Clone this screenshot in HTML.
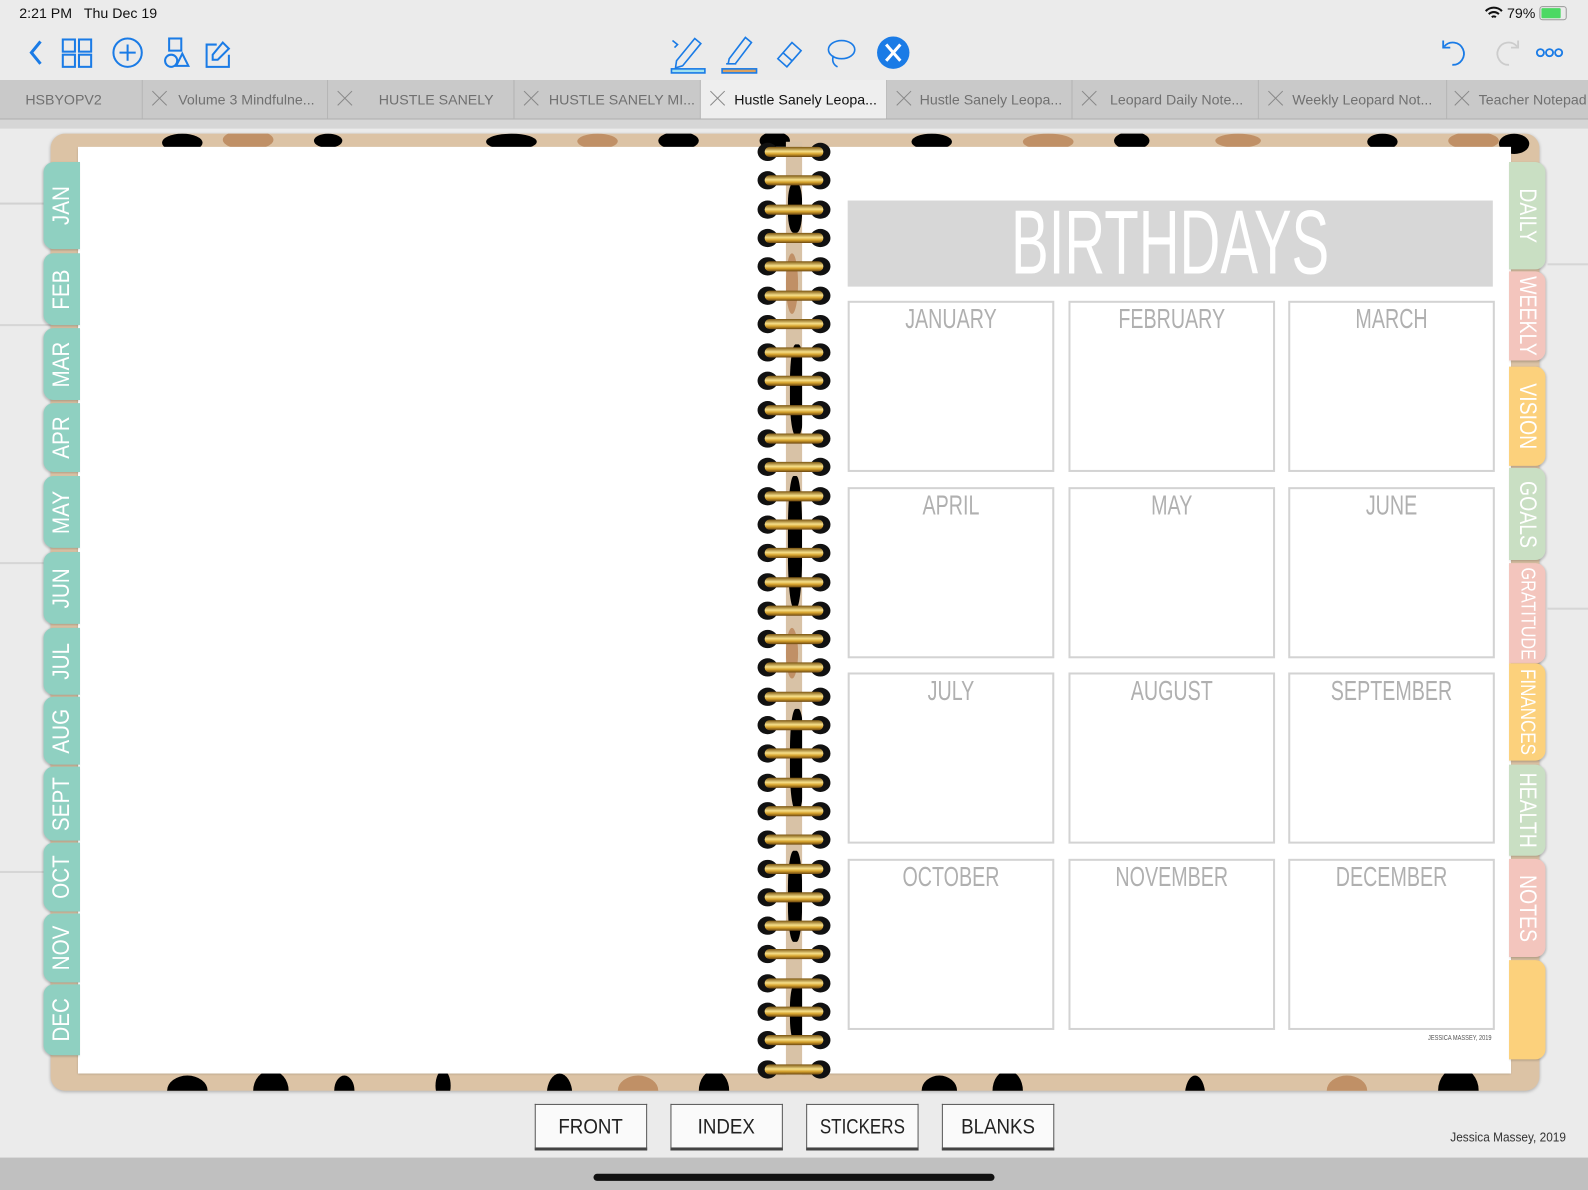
<!DOCTYPE html>
<html><head><meta charset="utf-8"><style>
*{margin:0;padding:0;box-sizing:border-box}
html,body{width:1588px;height:1190px;overflow:hidden;background:#e8e8e8;font-family:"Liberation Sans",sans-serif}
#w{position:absolute;left:0;top:0;width:1568px;height:1175px;transform:scale(1.01276);transform-origin:0 0;background:#ebebeb}
.a{position:absolute}
.tab{position:absolute;top:79px;height:38px;background:#c9c9c9;border-right:1px solid #b3b3b3;color:#707070;font-size:14px;line-height:38px;white-space:nowrap;overflow:hidden}
.x{position:absolute;top:10px;width:16px;height:16px}
.x:before,.x:after{content:"";position:absolute;left:7px;top:-2px;width:1px;height:20px;background:#888;transform:rotate(45deg)}
.x:after{transform:rotate(-45deg)}
.lt{position:absolute;left:43px;width:36px;background:#8fd0c1;border-radius:10px 0 0 10px;box-shadow:-1px 1px 2px rgba(0,0,0,.2)}
.lt span,.rt span{position:absolute;left:50%;top:50%;color:#fff;font-family:"Liberation Sans Narrow","Liberation Sans",sans-serif;font-size:24px;white-space:nowrap}
.lt span{transform:translate(-50%,-50%) rotate(-90deg) scaleX(.85)}
.rt{position:absolute;left:1490px;width:36px;border-radius:0 10px 10px 0;box-shadow:1px 1px 2px rgba(0,0,0,.2)}
.rt span{transform:translate(-50%,-50%) rotate(90deg) scaleX(.8)}
.g{background:#c9dfc3}.p{background:#f3c5bd}.y{background:#fcd17c}
.box{position:absolute;width:204px;height:169px;border:2px solid #d3d3d3}
.box div{text-align:center;color:#b0b0b0;font-family:"Liberation Sans Narrow","Liberation Sans",sans-serif;font-size:27px;margin-top:1px;transform:scaleX(.72)}
.sp{position:absolute;border-radius:50%;background:#000}
.sb{position:absolute;border-radius:50%;background:#c09066}
.ring{position:absolute;left:748px;width:72px;height:18px}
.ring i{position:absolute;top:0;width:20px;height:18px;border-radius:50%;background:#111}
.ring b{position:absolute;left:7px;top:4px;width:58px;height:10px;border-radius:5px;background:linear-gradient(#7a5410,#f7e08a 45%,#d6a22c 70%,#6a4510)}
.btn{position:absolute;top:1090px;width:111px;height:46px;background:#fafafa;border:1px solid #555;border-bottom:3px solid #444;text-align:center;line-height:44px;font-size:21px;color:#222;white-space:nowrap}
.btn span{display:inline-block;transform:scaleX(.88)}
</style></head><body><div id="w">
<div class="a" style="left:19px;top:5px;font-size:14px;color:#111">2:21 PM&nbsp;&nbsp;&nbsp;Thu Dec 19</div>
<div class="a" style="left:1488px;top:5px;font-size:14px;color:#111">79%</div>
<svg class="a" style="left:1466px;top:6px" width="18" height="14" viewBox="0 0 18 14"><path d="M1 5a11 11 0 0 1 16 0M4 8a7 7 0 0 1 10 0M7 11a3 3 0 0 1 4 0" stroke="#111" stroke-width="2" fill="none"/></svg>
<div class="a" style="left:1520px;top:6px;width:27px;height:14px;border:1px solid #999;border-radius:3px"><div style="margin:1px;width:19px;height:10px;background:#4cd964;border-radius:1px"></div></div>
<svg class="a" style="left:22px;top:36px" width="230" height="34" viewBox="0 0 230 34" fill="none" stroke="#1a7be6" stroke-width="2">
<path d="M18 5 L9 16 L18 27" stroke-width="3"/>
<rect x="40" y="3" width="12" height="12"/><rect x="56" y="3" width="12" height="12"/><rect x="40" y="18" width="12" height="12"/><rect x="56" y="18" width="12" height="12"/>
<circle cx="104" cy="16" r="14"/><path d="M104 8v16M96 16h16"/>
<rect x="145" y="2" width="12" height="12"/><circle cx="147" cy="24" r="6"/><path d="M158 17 L152 29 L164 29 Z"/>
<path d="M192 8h-10v22h22v-12M198 6l6 6-11 11h-5v-5z"/></svg>
<svg class="a" style="left:660px;top:32px" width="245" height="42" viewBox="0 0 245 42" fill="none" stroke="#1a7be6" stroke-width="1.6">
<path d="M8 28 L26 6 L32 11 L14 33 L7 35 Z"/><path d="M4 8l5 4-3 3"/>
<rect x="3" y="36" width="33" height="4" fill="#9fe0ef"/>
<path d="M60 26 L76 5 L82 10 L66 31 L59 31 Z M57 31h10"/>
<rect x="53" y="36" width="34" height="4" fill="#d9a060"/>
<path d="M108 26 L122 10 L131 18 L117 34 Z M113 20l9 8"/>
<ellipse cx="171" cy="17" rx="13" ry="9"/><path d="M163 23c-2 5 0 9 4 11"/>
<circle cx="222" cy="20" r="16" fill="#1a7be6" stroke="none"/><path d="M215 12l14 16M229 12l-14 16" stroke="#fff" stroke-width="3"/></svg>
<svg class="a" style="left:1420px;top:36px" width="130" height="32" viewBox="0 0 130 32" fill="none" stroke-width="1.8">
<path d="M6 10 A11 11 0 1 1 14 28" stroke="#1a7be6"/><path d="M5 4v7h7" stroke="#1a7be6"/>
<path d="M78 10 A11 11 0 1 0 70 28" stroke="#ccc"/><path d="M79 4v7h-7" stroke="#ccc"/>
<circle cx="101" cy="16" r="3.5" stroke="#1a7be6"/><circle cx="110" cy="16" r="3.5" stroke="#1a7be6"/><circle cx="119" cy="16" r="3.5" stroke="#1a7be6"/></svg>
<div class="a" style="left:0;top:79px;width:1568px;height:39px;background:#c9c9c9"></div>
<div class="tab" style="left:0;width:141px;padding-left:25px">HSBYOPV2</div>
<div class="tab" style="left:141px;width:183px;padding-left:35px"><span class="x" style="left:9px"></span>Volume 3 Mindfulne...</div>
<div class="tab" style="left:324px;width:184px;padding-left:50px"><span class="x" style="left:9px"></span>HUSTLE SANELY</div>
<div class="tab" style="left:508px;width:184px;padding-left:34px"><span class="x" style="left:9px"></span>HUSTLE SANELY MI...</div>
<div class="tab" style="left:692px;width:184px;padding-left:33px;background:#eeeeee;color:#111"><span class="x" style="left:9px"></span>Hustle Sanely Leopa...</div>
<div class="tab" style="left:876px;width:183px;padding-left:32px"><span class="x" style="left:9px"></span>Hustle Sanely Leopa...</div>
<div class="tab" style="left:1059px;width:184px;padding-left:37px"><span class="x" style="left:9px"></span>Leopard Daily Note...</div>
<div class="tab" style="left:1243px;width:186px;padding-left:33px"><span class="x" style="left:9px"></span>Weekly Leopard Not...</div>
<div class="tab" style="left:1429px;width:139px;padding-left:31px;border:0"><span class="x" style="left:7px"></span>Teacher Notepad</div>
<div class="a" style="left:0;top:117px;width:1568px;height:10px;background:#d6d6d6;border-top:1px solid #b0b0b0"></div>
<div class="a" style="left:0;top:200px;width:50px;height:2px;background:#d2d2d2"></div>
<div class="a" style="left:0;top:320px;width:50px;height:2px;background:#d6d6d6"></div>
<div class="a" style="left:0;top:555px;width:50px;height:2px;background:#d6d6d6"></div>
<div class="a" style="left:0;top:860px;width:50px;height:2px;background:#d6d6d6"></div>
<div class="a" style="left:1528px;top:260px;width:40px;height:2px;background:#d6d6d6"></div>
<div class="a" style="left:1528px;top:600px;width:40px;height:2px;background:#d6d6d6"></div>
<!-- cover -->
<div class="a" style="left:50px;top:132px;width:1470px;height:945px;background:#dcc3a5;border-radius:14px;overflow:hidden;box-shadow:0 1px 3px rgba(0,0,0,.25)">
<div class="sp" style="left:110px;top:0;width:40px;height:18px"></div>
<div class="sb" style="left:170px;top:-4px;width:50px;height:20px"></div>
<div class="sp" style="left:260px;top:0;width:28px;height:14px"></div>
<div class="sp" style="left:430px;top:0;width:50px;height:16px"></div>
<div class="sb" style="left:520px;top:0;width:40px;height:15px"></div>
<div class="sp" style="left:600px;top:-2px;width:40px;height:18px"></div>
<div class="sp" style="left:700px;top:-2px;width:30px;height:18px"></div>
<div class="sp" style="left:850px;top:0;width:40px;height:16px"></div>
<div class="sb" style="left:960px;top:0;width:50px;height:16px"></div>
<div class="sp" style="left:1050px;top:-2px;width:35px;height:18px"></div>
<div class="sb" style="left:1150px;top:0;width:45px;height:14px"></div>
<div class="sp" style="left:1300px;top:0;width:30px;height:16px"></div>
<div class="sb" style="left:1380px;top:-2px;width:50px;height:18px"></div>
<div class="sp" style="left:1430px;top:0;width:30px;height:20px"></div>
<div class="sp" style="left:115px;top:930px;width:40px;height:30px"></div>
<div class="sp" style="left:200px;top:925px;width:35px;height:40px"></div>
<div class="sp" style="left:280px;top:930px;width:20px;height:30px"></div>
<div class="sp" style="left:380px;top:925px;width:15px;height:30px"></div>
<div class="sp" style="left:490px;top:928px;width:25px;height:40px"></div>
<div class="sb" style="left:560px;top:930px;width:40px;height:30px"></div>
<div class="sp" style="left:640px;top:925px;width:30px;height:40px"></div>
<div class="sp" style="left:860px;top:930px;width:35px;height:30px"></div>
<div class="sp" style="left:930px;top:925px;width:30px;height:40px"></div>
<div class="sp" style="left:1120px;top:930px;width:20px;height:40px"></div>
<div class="sb" style="left:1260px;top:930px;width:40px;height:30px"></div>
<div class="sp" style="left:1370px;top:922px;width:40px;height:45px"></div>
</div>
<!-- pages -->
<div class="a" style="left:77px;top:145px;width:704px;height:915px;background:#fff;box-shadow:0 1px 2px rgba(0,0,0,.2)"></div>
<div class="a" style="left:790px;top:145px;width:702px;height:915px;background:#fff;box-shadow:0 1px 2px rgba(0,0,0,.2)"></div>
<!-- rod behind spiral -->
<div class="a" style="left:776px;top:140px;width:16px;height:922px;background:#d8c2a6;overflow:hidden">
<div class="sp" style="left:2px;top:40px;width:14px;height:50px;border-radius:40%"></div>
<div class="sb" style="left:0;top:110px;width:12px;height:60px"></div>
<div class="sp" style="left:4px;top:200px;width:14px;height:90px;border-radius:40%"></div>
<div class="sp" style="left:2px;top:330px;width:14px;height:130px;border-radius:40%"></div>
<div class="sb" style="left:0;top:480px;width:12px;height:50px"></div>
<div class="sp" style="left:4px;top:560px;width:14px;height:100px;border-radius:40%"></div>
<div class="sp" style="left:2px;top:700px;width:14px;height:90px;border-radius:40%"></div>
<div class="sp" style="left:4px;top:830px;width:14px;height:60px;border-radius:40%"></div>
</div>
<!-- left tabs -->
<div class="lt" style="top:160px;height:86px"><span>JAN</span></div>
<div class="lt" style="top:250px;height:71px"><span>FEB</span></div>
<div class="lt" style="top:324px;height:71px"><span>MAR</span></div>
<div class="lt" style="top:398px;height:68px"><span>APR</span></div>
<div class="lt" style="top:470px;height:71px"><span>MAY</span></div>
<div class="lt" style="top:545px;height:71px"><span>JUN</span></div>
<div class="lt" style="top:620px;height:66px"><span>JUL</span></div>
<div class="lt" style="top:688px;height:67px"><span>AUG</span></div>
<div class="lt" style="top:757px;height:73px"><span>SEPT</span></div>
<div class="lt" style="top:832px;height:68px"><span>OCT</span></div>
<div class="lt" style="top:902px;height:68px"><span>NOV</span></div>
<div class="lt" style="top:972px;height:70px"><span>DEC</span></div>
<!-- right tabs -->
<div class="rt g" style="top:160px;height:106px"><span>DAILY</span></div>
<div class="rt p" style="top:268px;height:88px"><span>WEEKLY</span></div>
<div class="rt y" style="top:362px;height:98px"><span>VISION</span></div>
<div class="rt g" style="top:462px;height:91px"><span>GOALS</span></div>
<div class="rt p" style="top:556px;height:99px"><span style="font-size:20px">GRATITUDE</span></div>
<div class="rt y" style="top:655px;height:96px"><span style="font-size:21px">FINANCES</span></div>
<div class="rt g" style="top:755px;height:90px"><span>HEALTH</span></div>
<div class="rt p" style="top:848px;height:97px"><span>NOTES</span></div>
<div class="rt y" style="top:948px;height:98px"></div>
<div id="sp"></div>
<!-- birthdays -->
<div class="a" style="left:837px;top:198px;width:637px;height:85px;background:#d7d7d7;text-align:center;color:#fff;font-family:'Liberation Sans Narrow','Liberation Sans',sans-serif;font-size:90px;line-height:85px"><span style="display:inline-block;transform:scaleX(.62)">BIRTHDAYS</span></div>
<div class="box" style="left:837px;top:297px"><div>JANUARY</div></div>
<div class="box" style="left:1055px;top:297px"><div>FEBRUARY</div></div>
<div class="box" style="left:1272px;top:297px"><div>MARCH</div></div>
<div class="box" style="left:837px;top:481px"><div>APRIL</div></div>
<div class="box" style="left:1055px;top:481px"><div>MAY</div></div>
<div class="box" style="left:1272px;top:481px"><div>JUNE</div></div>
<div class="box" style="left:837px;top:664px"><div>JULY</div></div>
<div class="box" style="left:1055px;top:664px"><div>AUGUST</div></div>
<div class="box" style="left:1272px;top:664px"><div>SEPTEMBER</div></div>
<div class="box" style="left:837px;top:848px"><div>OCTOBER</div></div>
<div class="box" style="left:1055px;top:848px"><div>NOVEMBER</div></div>
<div class="box" style="left:1272px;top:848px"><div>DECEMBER</div></div>
<div class="a" style="left:1410px;top:1022px;font-size:7px;color:#555;transform:scaleX(.8);transform-origin:0 0">JESSICA MASSEY, 2019</div>
<div class="btn" style="left:528px"><span>FRONT</span></div>
<div class="btn" style="left:662px"><span>INDEX</span></div>
<div class="btn" style="left:796px"><span style="transform:scaleX(.8)">STICKERS</span></div>
<div class="btn" style="left:930px"><span>BLANKS</span></div>
<div class="a" style="left:1432px;top:1115px;font-size:13px;color:#333;transform:scaleX(.9);transform-origin:0 0">Jessica Massey, 2019</div>
<div class="a" style="left:0;top:1143px;width:1568px;height:32px;background:#c0c0c0"></div>
<div class="a" style="left:586px;top:1159px;width:396px;height:7px;border-radius:4px;background:#111"></div>
</div>
<script>
var s='';for(var i=0;i<33;i++){var t=141+i*28.3;s+='<div class="ring" style="top:'+t.toFixed(1)+'px"><i style="left:0"></i><i style="left:52px"></i><b></b></div>';}
document.getElementById('sp').innerHTML=s;
</script>
</body></html>
